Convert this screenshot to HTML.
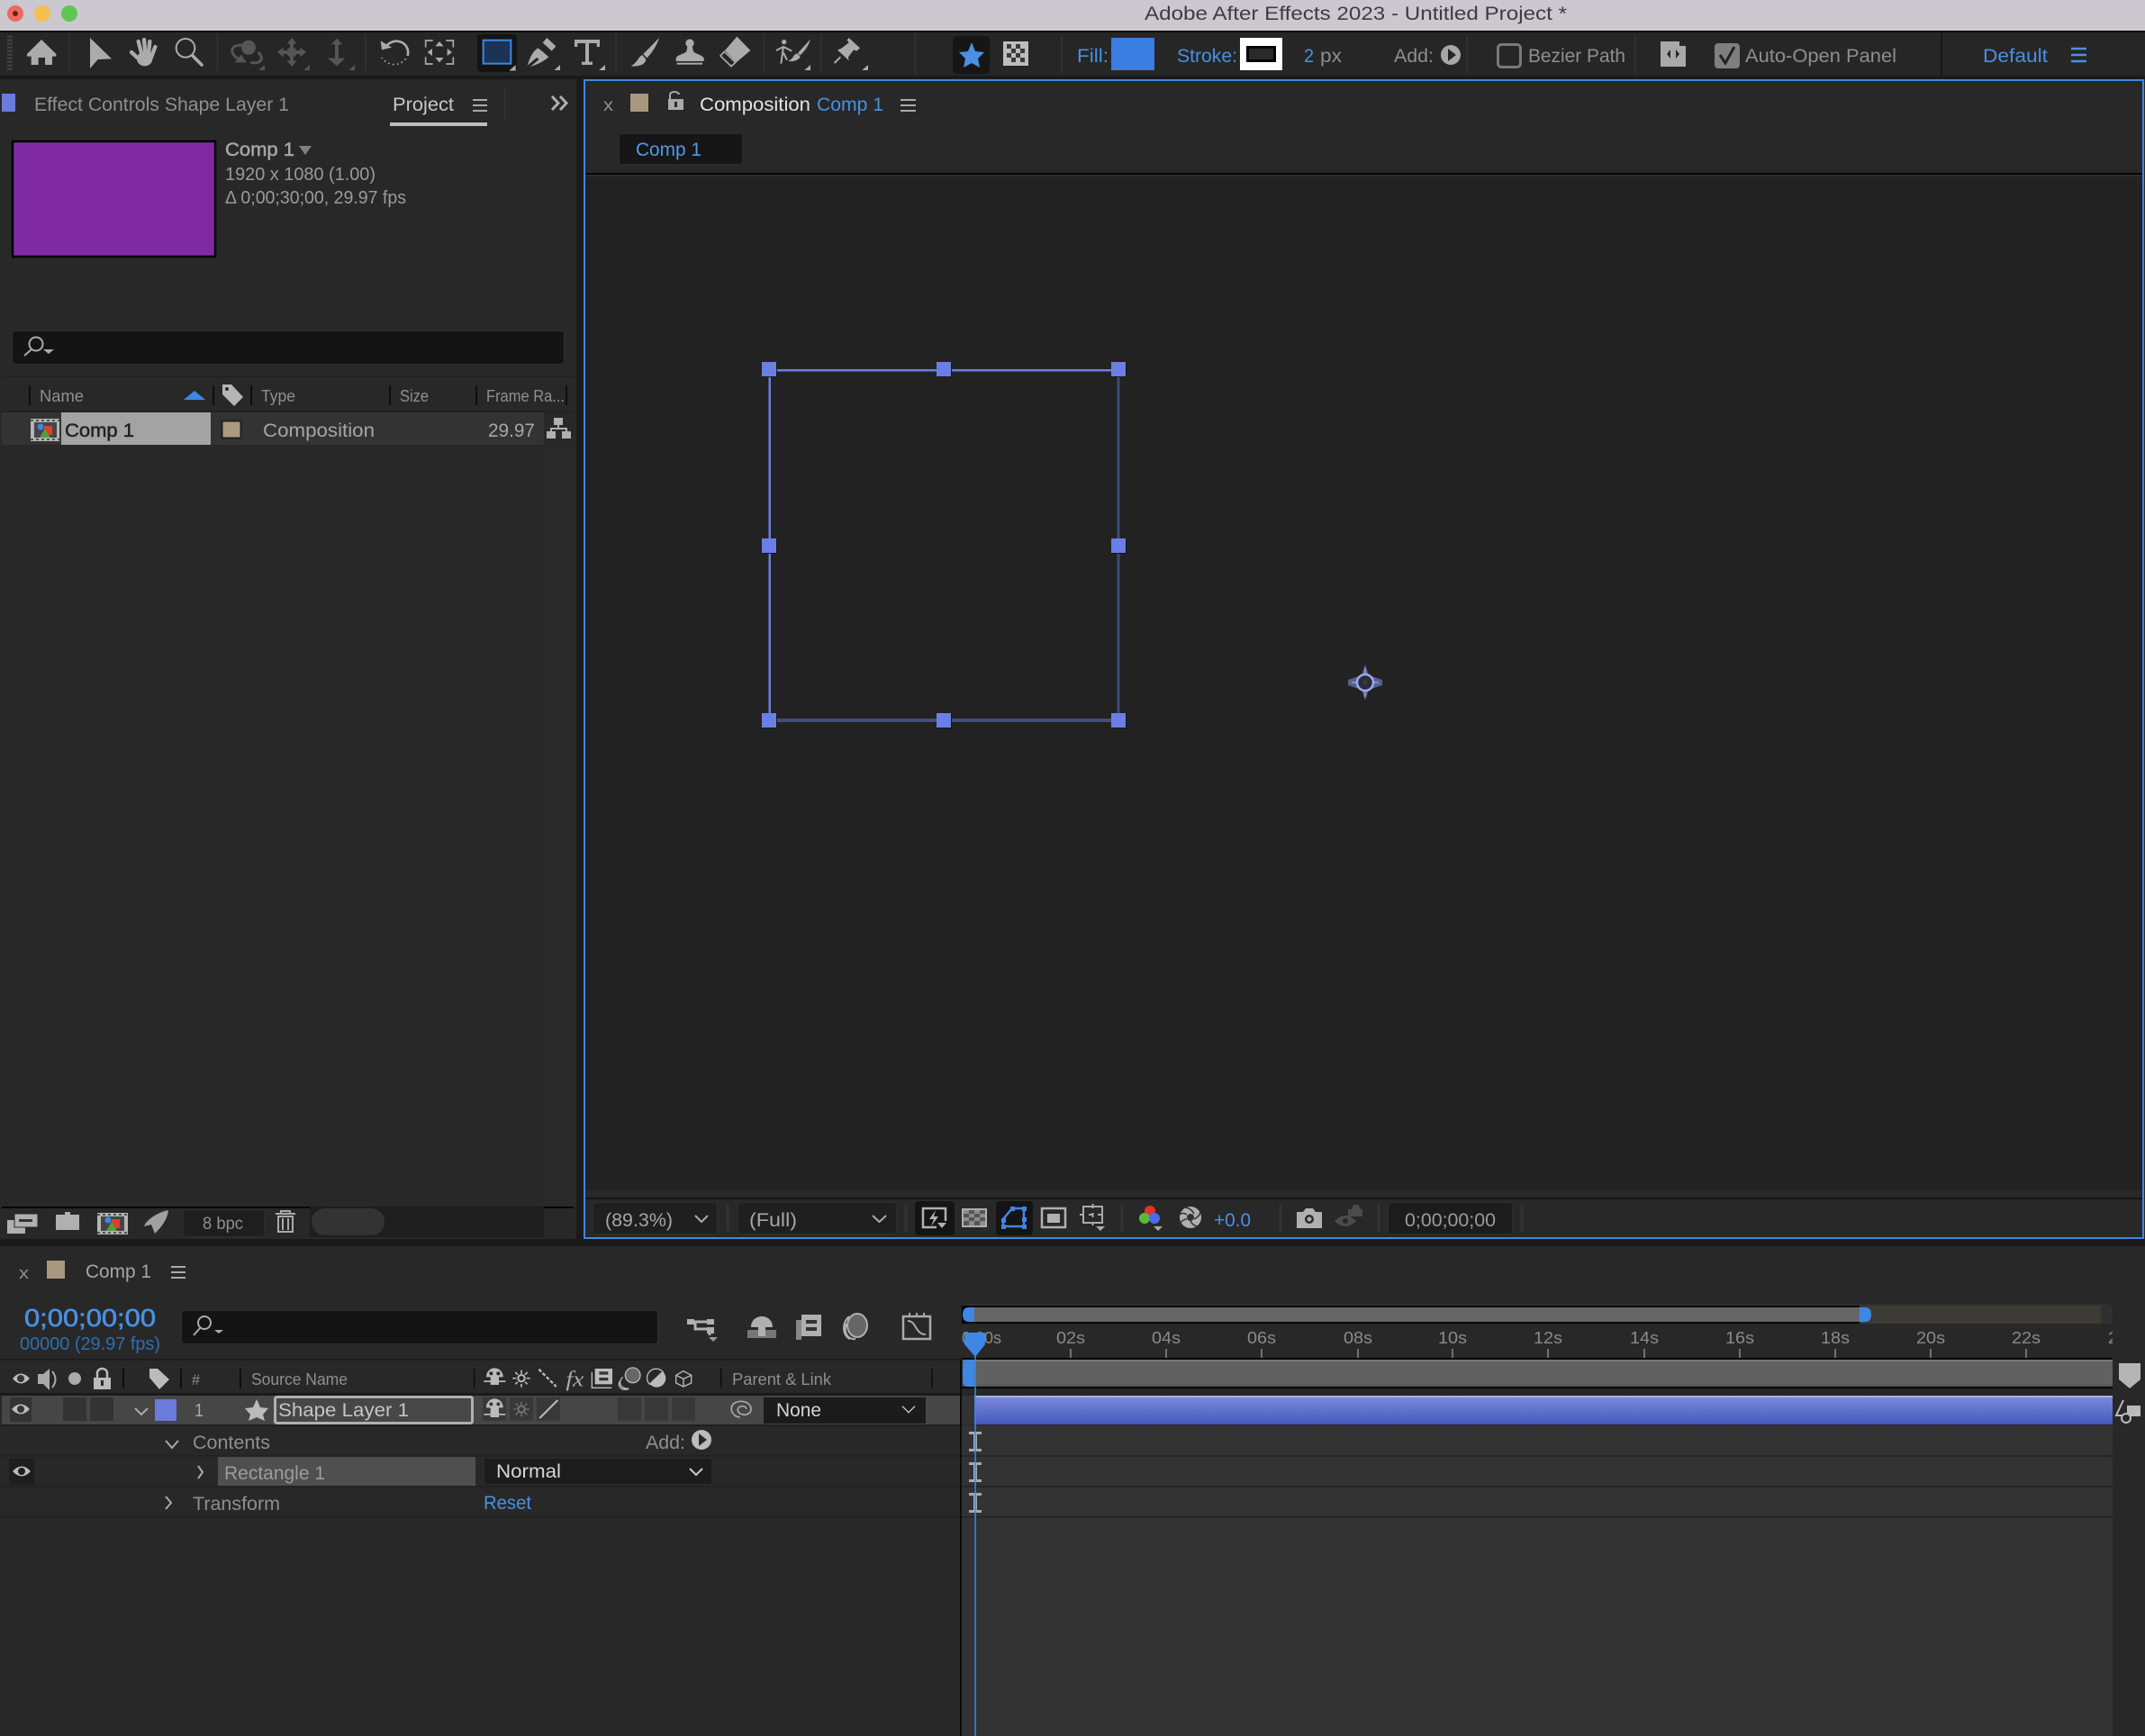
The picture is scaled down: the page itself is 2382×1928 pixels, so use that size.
<!DOCTYPE html>
<html lang="en"><head><meta charset="utf-8"><title>Adobe After Effects 2023 - Untitled Project *</title>
<style>
html,body{margin:0;padding:0;background:#282828;width:2382px;height:1928px;overflow:hidden}
svg{display:block}
text{font-family:"Liberation Sans",sans-serif;font-size:20px;fill:#8f8f8f}
.b{fill:#4a90e2}.w{fill:#d5d5d5}.l{fill:#a6a6a6}
</style></head><body>
<svg xmlns="http://www.w3.org/2000/svg" width="2382" height="1928" viewBox="0 0 2382 1928">
<defs>
<linearGradient id="lb" x1="0" y1="0" x2="0" y2="1"><stop offset="0" stop-color="#7f8dda"/><stop offset=".5" stop-color="#6273cf"/><stop offset="1" stop-color="#4257bb"/></linearGradient>
<clipPath id="rc"><rect x="1068" y="1470" width="1278" height="38"/></clipPath>
<filter id="nz" x="0" y="0" width="1" height="1"><feTurbulence type="fractalNoise" baseFrequency=".7" numOctaves="2" seed="3"/><feColorMatrix type="matrix" values="0 0 0 0 .1  0 0 0 0 .15  0 0 0 0 .5  0 0 0 1.2 -.45"/></filter>
</defs>
<!-- base -->
<rect width="2382" height="1928" fill="#282828"/>
<!-- title bar -->
<rect width="2382" height="34" fill="#cbc8cf"/>
<rect y="34" width="2382" height="2" fill="#0c0c0c"/>
<circle cx="17" cy="15" r="9" fill="#ec6a5e"/><circle cx="17" cy="15" r="3" fill="#7a1a14"/>
<circle cx="47" cy="15" r="9" fill="#f5bf4f"/><circle cx="77" cy="15" r="9" fill="#61c554"/>
<text x="1271" y="22" textLength="469" lengthAdjust="spacingAndGlyphs" style="fill:#3e3c42;font-size:21px">Adobe After Effects 2023 - Untitled Project *</text>
<!-- toolbar -->
<rect y="36" width="2382" height="48" fill="#262626"/>
<rect y="84" width="2382" height="4" fill="#1a1a1a"/>
<rect x="640" y="84" width="8" height="1300" fill="#1a1a1a"/>
<g transform="translate(0 36) scale(.33333)">
<path d="M24 14h18M24 26h18M24 38h18M24 50h18M24 62h18M24 74h18M24 86h18M24 98h18M24 110h18M24 122h18" stroke="#444" stroke-width="6"/>
<path d="M232 5V130M725 5V130M1218 5V130" stroke="#303030" stroke-width="6"/>
<path d="M138 24L187 72V80H174V108H150V84H128V108H104V80H90V72Z" fill="#ababab"/>
<path d="M300 18L372 88L326 90L300 120Z" fill="#ababab"/>
<g stroke="#ababab" stroke-width="13" stroke-linecap="round"><path d="M474 80L461 30M485 80L480 24M494 80L499 30M503 85L517 48M458 85L438 66"/></g>
<ellipse cx="482" cy="88" rx="26" ry="24" fill="#ababab"/>
<circle cx="618" cy="52" r="31" fill="none" stroke="#ababab" stroke-width="6"/>
<path d="M642 78L672 108" stroke="#ababab" stroke-width="11" stroke-linecap="round"/>
<circle cx="828" cy="50" r="24" fill="#555"/>
<path d="M795 90C760 65 770 42 805 42M835 100C870 108 882 85 860 66" fill="none" stroke="#555" stroke-width="9"/>
<path d="M782 100H822L803 74ZM882 108V126H862ZM1032 108V126H1012ZM1182 108V126H1162Z" fill="#555"/>
<path d="M972 18L988 38H978V60H1000V50L1020 66L1000 82V72H978V94H988L972 114L956 94H966V72H944V82L924 66L944 50V60H966V38H956Z" fill="#555"/>
<circle cx="972" cy="66" r="17" fill="#555"/>
<path d="M1122 20L1140 40H1128V86H1150L1122 112L1092 86H1116V40H1104Z" fill="#555"/>
<path d="M1290 42C1322 12 1368 38 1358 78" fill="none" stroke="#ababab" stroke-width="8"/>
<path d="M1268 28L1272 58L1305 50Z" fill="#ababab"/>
<path d="M1352 88C1330 115 1290 112 1272 84" fill="none" stroke="#ababab" stroke-width="5" stroke-dasharray="5 10"/>
<path d="M1418 50V27H1442M1486 27H1510V50M1510 82V105H1486M1442 105H1418V82" fill="none" stroke="#ababab" stroke-width="5"/>
<path d="M1464 30L1450 46H1478ZM1464 100L1450 84H1478ZM1424 66L1440 54V78ZM1506 66L1490 54V78Z" fill="#ababab"/>
</g>
<g transform="translate(520 36) scale(.33333)">
<rect x="30" y="6" width="132" height="126" rx="12" fill="#141414"/>
<rect x="50" y="26" width="92" height="78" fill="#1b3355" stroke="#3f87e4" stroke-width="6"/>
<path d="M158 108V128H136ZM306 108V126H286ZM456 108V126H436ZM1140 108V126H1120ZM1332 108V126H1312Z" fill="#ababab"/>
<path d="M232 52C215 62 205 85 197 110L228 84L236 90L207 114C225 108 250 98 268 82L248 64Z" fill="#ababab"/>
<path d="M262 18L292 46L278 62L248 34Z" fill="#ababab"/>
<path d="M354 24H438V48H428V36H402V98H414V108H378V98H390V36H364V48H354Z" fill="#ababab"/>
<path d="M492 5V130M985 5V130M1175 5V130M1490 0V144" stroke="#303030" stroke-width="6"/>
<path d="M636 18C625 30 595 60 583 72L595 85C610 72 630 40 636 18Z" fill="#ababab"/>
<path d="M580 75C565 82 565 100 542 112C565 115 590 108 592 90Z" fill="#ababab"/>
<circle cx="738" cy="36" r="14" fill="#ababab"/>
<path d="M730 45L728 60C725 72 700 72 692 85V96H785V85C775 72 752 72 749 60L746 45Z" fill="#ababab"/>
<rect x="695" y="101" width="85" height="6" fill="#ababab"/>
<path d="M895 14L940 60L893 100L855 60Z" fill="#ababab"/>
<path d="M853 64L890 100L876 113L840 78Z" fill="none" stroke="#ababab" stroke-width="5"/>
<circle cx="1052" cy="32" r="8" fill="#ababab"/>
<path d="M1026 60L1050 48L1078 62M1050 48L1042 104M1050 68L1062 92" fill="none" stroke="#ababab" stroke-width="6"/>
<path d="M1140 22C1125 40 1105 60 1098 70L1105 76C1120 65 1135 42 1140 22Z" fill="#ababab"/>
<path d="M1095 70C1080 75 1085 88 1065 95C1085 100 1105 90 1106 80Z" fill="#ababab"/>
<path d="M1268 18L1305 52L1294 62L1284 58L1266 82L1268 94L1230 58L1242 54L1268 34L1262 26Z" fill="#ababab"/>
<path d="M1240 82L1220 102" stroke="#ababab" stroke-width="6"/>
</g>
<rect x="1058" y="40" width="41" height="42" rx="4" fill="#161616"/>
<path d="M1079 47L1083 57L1093 58L1086 65L1088 75L1079 70L1070 75L1072 65L1065 58L1075 57Z" fill="#4a90e2"/>
<rect x="1114" y="46" width="28" height="27" fill="#bdbdbd"/>
<path d="M1118 49h5v5h-5zM1128 49h5v5h-5zM1123 54h5v5h-5zM1133 54h5v5h-5zM1118 59h5v5h-5zM1128 59h5v5h-5zM1123 64h5v5h-5zM1133 64h5v5h-5z" fill="#3a3a3a"/>
<path d="M1179 40V82M1629 40V82M1816 40V82" stroke="#303030" stroke-width="2"/>
<rect x="2155" y="36" width="2" height="48" fill="#181818"/>
<text class="b" x="1196" y="69" textLength="35" lengthAdjust="spacingAndGlyphs" style="font-size:21px">Fill:</text>
<rect x="1234" y="42" width="48" height="36" fill="#3a7de0"/><rect x="1234" y="77" width="48" height="1" fill="#777"/>
<text class="b" x="1307" y="69" textLength="67" lengthAdjust="spacingAndGlyphs" style="font-size:21px">Stroke:</text>
<rect x="1377" y="42" width="47" height="36" fill="#fff"/>
<rect x="1385.500" y="52.500" width="30" height="15" fill="#2a2a2a" stroke="#050505" stroke-width="3"/>
<text class="b" x="1448" y="69" textLength="11" lengthAdjust="spacingAndGlyphs" style="font-size:21px">2</text>
<text x="1466" y="69" textLength="24" lengthAdjust="spacingAndGlyphs" style="font-size:21px">px</text>
<text x="1548" y="69" textLength="44" lengthAdjust="spacingAndGlyphs" style="font-size:21px">Add:</text>
<circle cx="1611" cy="61" r="11" fill="#a8a8a8"/><path d="M1608 54L1617 61L1608 68Z" fill="#262626"/>
<rect x="1663.500" y="49.500" width="25" height="25" rx="4" fill="none" stroke="#7a7a7a" stroke-width="3"/>
<text x="1697" y="69" textLength="108" lengthAdjust="spacingAndGlyphs" style="font-size:21px">Bezier Path</text>
<path d="M1844 46H1865V51H1872V74H1844Z" fill="#a8a8a8"/>
<path d="M1855 55L1851 60L1855 65ZM1861 55L1865 60L1861 65Z" fill="#262626"/>
<rect x="1904" y="48" width="28" height="28" rx="4" fill="#7f7f7f"/>
<path d="M1910 61L1916 70L1926 52" fill="none" stroke="#222" stroke-width="3"/>
<text x="1938" y="69" textLength="168" lengthAdjust="spacingAndGlyphs" style="font-size:21px">Auto-Open Panel</text>
<text class="b" x="2202" y="69" textLength="72" lengthAdjust="spacingAndGlyphs" style="font-size:21px">Default</text>
<path d="M2300 54H2317M2300 61H2317M2300 68H2317" stroke="#4a90e2" stroke-width="2.500"/>

<!-- left panel -->
<rect x="2" y="104" width="15" height="20" fill="#6a7bdb"/>
<text x="38" y="123" textLength="283" lengthAdjust="spacingAndGlyphs" style="font-size:21px">Effect Controls Shape Layer 1</text>
<text x="436" y="123" textLength="68" lengthAdjust="spacingAndGlyphs" style="font-size:21px;fill:#c8c8c8">Project</text>
<rect x="433" y="136" width="108" height="4" fill="#bdbdbd"/>
<path d="M525 111H541M525 117H541M525 123H541" stroke="#aaa" stroke-width="2"/>
<rect x="560" y="97" width="1" height="38" fill="#333"/>
<path d="M613 107L620 114.500L613 122M622 107L629 114.500L622 122" fill="none" stroke="#b0b0b0" stroke-width="3"/>
<rect x="14" y="157" width="225" height="128" fill="#7f2aa3" stroke="#000" stroke-width="2.500"/>
<text class="l" x="250" y="173" textLength="77" lengthAdjust="spacingAndGlyphs" style="font-size:21px;stroke:#a6a6a6;stroke-width:.5">Comp 1</text>
<path d="M332 162H346L339 172Z" fill="#7f7f7f"/>
<text x="250" y="200" textLength="167" lengthAdjust="spacingAndGlyphs" style="font-size:20px;fill:#9a9a9a">1920 x 1080 (1.00)</text>
<text x="250" y="226" textLength="201" lengthAdjust="spacingAndGlyphs" style="font-size:20px;fill:#9a9a9a">Δ 0;00;30;00, 29.97 fps</text>
<rect x="13.500" y="367.500" width="613" height="37" rx="4" fill="#141414" stroke="#2f2f2f"/>
<circle cx="40" cy="382" r="7.500" fill="none" stroke="#aaa" stroke-width="2"/><path d="M35 388L27 395" stroke="#aaa" stroke-width="2"/><path d="M48 388H60L54 393Z" fill="#aaa"/>
<rect x="2" y="417" width="636" height="2" fill="#222"/>
<path d="M33 428V450M237 428V450M279 428V450M433 428V450M529 428V450M629 428V450" stroke="#0e0e0e" stroke-width="2"/>
<text x="44" y="446" textLength="49" lengthAdjust="spacingAndGlyphs" style="font-size:18px">Name</text>
<path d="M204 444L216 434L228 444Z" fill="#3f87e4"/>
<path d="M247 427H257L270 441L260 451L247 438Z" fill="#b5b5b5"/><circle cx="252" cy="432" r="2" fill="#282828"/>
<text x="290" y="446" textLength="38" lengthAdjust="spacingAndGlyphs" style="font-size:18px">Type</text>
<text x="444" y="446" textLength="32" lengthAdjust="spacingAndGlyphs" style="font-size:18px">Size</text>
<text x="540" y="446" textLength="87" lengthAdjust="spacingAndGlyphs" style="font-size:18px">Frame Ra...</text>
<rect x="2" y="456" width="636" height="2" fill="#222"/>
<rect x="2" y="458" width="602" height="36" fill="#333"/>
<rect x="68" y="458" width="166" height="36" fill="#a3a3a3"/>
<rect x="34" y="465" width="32" height="25" fill="#b5b5b5"/><rect x="38" y="469" width="25" height="17" fill="#454545"/>
<path d="M36 465V490M40 465V490" stroke="#333" stroke-width="0"/>
<path d="M34 467h32M34 488h32" stroke="#333" stroke-width="1.500" stroke-dasharray="3 3"/>
<circle cx="45" cy="474" r="3.500" fill="#3d86e5"/><rect x="49" y="473" width="9" height="10" fill="#e33b2e"/><path d="M50 476L56 486H44Z" fill="#4ea23e"/>
<text x="72" y="485" textLength="77" lengthAdjust="spacingAndGlyphs" style="font-size:21px;fill:#222;stroke:#222;stroke-width:.5">Comp 1</text>
<rect x="246.500" y="467.500" width="21" height="19" fill="#ab9a7d" stroke="#1f1f1f" stroke-width="2"/>
<text class="l" x="292" y="485" textLength="124" lengthAdjust="spacingAndGlyphs" style="font-size:21px">Composition</text>
<text class="l" x="542" y="485" textLength="52" lengthAdjust="spacingAndGlyphs" style="font-size:21px">29.97</text>
<path d="M615 464h10v8h-10zM607 479h10v8h-10zM624 479h10v8h-10z" fill="#b0b0b0"/><path d="M620 472V476M612 479V476H629V479" fill="none" stroke="#b0b0b0" stroke-width="2"/>
<rect x="604" y="496" width="36" height="844" fill="#2a2a2a"/>
<!-- project bottom bar -->
<rect x="2" y="1340" width="635" height="2" fill="#060606"/>
<rect x="344" y="1340" width="260" height="34" fill="#1e1e1e"/>
<rect x="346" y="1342" width="81" height="30" rx="15" fill="#333"/>
<rect x="8" y="1355" width="20" height="15" fill="#b0b0b0"/><rect x="16" y="1348" width="26" height="15" fill="#b0b0b0" stroke="#282828"/><rect x="21" y="1354" width="15" height="3" fill="#333"/>
<path d="M62 1349H72V1346H78V1349H88V1366H62Z" fill="#b0b0b0"/>
<rect x="108" y="1347" width="34" height="24" fill="#b5b5b5"/><rect x="112" y="1351" width="26" height="16" fill="#454545"/>
<path d="M108 1349h34M108 1369h34" stroke="#333" stroke-width="1.500" stroke-dasharray="3 3"/>
<circle cx="120" cy="1355" r="3.500" fill="#3d86e5"/><rect x="124" y="1354" width="9" height="10" fill="#e33b2e"/><path d="M124 1357L130 1367H118Z" fill="#4ea23e"/>
<path d="M187 1344C176 1346 163 1354 160 1362L168 1360L172 1370C180 1362 186 1354 187 1344Z" fill="#a0a0a0"/>
<rect x="203.500" y="1343.500" width="90" height="30" rx="3" fill="#1e1e1e" stroke="#2e2e2e"/>
<text x="225" y="1365" textLength="45" lengthAdjust="spacingAndGlyphs" style="font-size:19px">8 bpc</text>
<path d="M306 1348H328M312 1348V1345H322V1348M309 1351H325V1368H309ZM314 1353V1366M320 1353V1366" fill="none" stroke="#aaa" stroke-width="2"/>

<!-- composition panel -->
<rect x="648" y="88" width="1734" height="1288" fill="#282828"/>
<rect x="650" y="196" width="1730" height="1126" fill="#222"/>
<rect x="650" y="192" width="1730" height="2" fill="#050505"/>
<rect x="650" y="194" width="1730" height="2" fill="#2e2e2e"/>
<text x="670" y="123" textLength="11" lengthAdjust="spacingAndGlyphs" style="font-size:19px">x</text>
<rect x="700" y="104" width="20" height="20" fill="#a8987d"/>
<path d="M744 110V105A5 3 0 0 1 754 105" fill="none" stroke="#aaa" stroke-width="2"/><rect x="742" y="110" width="17" height="12" fill="#aaa"/><rect x="749" y="113" width="3" height="6" fill="#282828"/>
<text x="777" y="123" textLength="123" lengthAdjust="spacingAndGlyphs" style="font-size:21px;fill:#e4e4e4">Composition</text>
<text class="b" x="907" y="123" textLength="74" lengthAdjust="spacingAndGlyphs" style="font-size:21px">Comp 1</text>
<path d="M1000 111H1017M1000 117H1017M1000 123H1017" stroke="#aaa" stroke-width="2"/>
<rect x="687.500" y="148.500" width="137" height="34" rx="3" fill="#161616" stroke="#2c2c2c"/>
<text x="706" y="173" textLength="73" lengthAdjust="spacingAndGlyphs" style="font-size:21px;fill:#4f9ae8">Comp 1</text>
<!-- shape -->
<rect x="854" y="410" width="390" height="2.500" fill="#6a7fe0"/>
<rect x="853.500" y="410" width="2.500" height="390" fill="#6a7fe0"/>
<rect x="1240.500" y="410" width="3" height="390" fill="#3f4a78"/>
<rect x="854" y="798" width="390" height="4" fill="#444c78"/>
<g fill="#141414" opacity=".9"><rect x="847" y="403" width="16" height="16"/><rect x="1041" y="403" width="16" height="16"/><rect x="1235" y="403" width="16" height="16"/><rect x="847" y="599" width="16" height="16"/><rect x="1235" y="599" width="16" height="16"/><rect x="847" y="793" width="16" height="16"/><rect x="1041" y="793" width="16" height="16"/><rect x="1235" y="793" width="16" height="16"/></g>
<g fill="#6a7fe6"><rect x="846" y="402" width="16" height="16"/><rect x="1040" y="402" width="16" height="16"/><rect x="1234" y="402" width="16" height="16"/><rect x="846" y="598" width="16" height="16"/><rect x="1234" y="598" width="16" height="16"/><rect x="846" y="792" width="16" height="16"/><rect x="1040" y="792" width="16" height="16"/><rect x="1234" y="792" width="16" height="16"/></g>
<path d="M1516 738L1520 750L1535 755V761L1520 766L1516 778L1512 766L1497 761V755L1512 750Z" fill="#59618c"/>
<path d="M1516 742V774M1501 758H1531" stroke="#7d8cd6" stroke-width="2"/>
<circle cx="1516" cy="758" r="9" fill="#2a2c3a" stroke="#9aaaf0" stroke-width="2.500"/><circle cx="1516" cy="758" r="3" fill="#3a3a3a"/>
<!-- comp bottom bar -->
<rect x="650" y="1330" width="1730" height="2" fill="#151515"/>
<rect x="658.500" y="1335.500" width="138" height="35" rx="3" fill="#1f1f1f" stroke="#2e2e2e"/>
<rect x="819.500" y="1335.500" width="176" height="35" rx="3" fill="#1f1f1f" stroke="#2e2e2e"/>
<text class="l" x="672" y="1362" textLength="75" lengthAdjust="spacingAndGlyphs" style="font-size:21px">(89.3%)</text>
<text class="l" x="832" y="1362" textLength="53" lengthAdjust="spacingAndGlyphs" style="font-size:21px">(Full)</text>
<path d="M772 1350L779 1357L786 1350M969 1350L976.500 1357L984 1350" fill="none" stroke="#aaa" stroke-width="2"/>
<path d="M808 1338V1368M1006 1338V1368M1246 1338V1368M1422 1338V1368M1531 1338V1368M1690 1338V1368" stroke="#333" stroke-width="3"/>
<rect x="1016" y="1334" width="44" height="38" rx="4" fill="#141414"/>
<path d="M1050 1356V1342H1025V1363H1040" fill="none" stroke="#b0b0b0" stroke-width="2.500"/>
<path d="M1039 1344L1032 1354H1037L1034 1362L1042 1351H1037Z" fill="#b0b0b0"/><path d="M1041 1358H1051L1046 1364Z" fill="#b0b0b0"/>
<rect x="1068" y="1342" width="28" height="21" fill="#b0b0b0"/><rect x="1070" y="1344" width="24" height="17" fill="#555"/><path d="M1070 1344h6v4h-6zM1082 1344h6v4h-6zM1076 1348h6v4h-6zM1088 1348h6v4h-6zM1070 1352h6v4h-6zM1082 1352h6v4h-6zM1076 1356h6v5h-6zM1088 1356h6v5h-6z" fill="#8c8c8c"/>
<rect x="1106" y="1334" width="41" height="38" rx="4" fill="#141414"/>
<path d="M1124 1342H1137V1362H1114V1354Z" fill="none" stroke="#3f87e4" stroke-width="2.500"/>
<g fill="#3f87e4"><rect x="1122" y="1340" width="5" height="5"/><rect x="1135" y="1340" width="5" height="5"/><rect x="1112" y="1353" width="5" height="5"/><rect x="1135" y="1352" width="5" height="5"/><rect x="1112" y="1360" width="5" height="5"/><rect x="1135" y="1360" width="5" height="5"/></g>
<rect x="1157" y="1342" width="26" height="21" fill="none" stroke="#b0b0b0" stroke-width="2.500"/><rect x="1163" y="1348" width="14" height="10" fill="#b0b0b0"/>
<rect x="1203" y="1340" width="21" height="18" fill="none" stroke="#aaa" stroke-width="2"/>
<path d="M1199 1349H1228M1213.500 1337V1361" stroke="#aaa" stroke-width="2" stroke-dasharray="5 5"/><path d="M1217 1362H1227L1222 1367Z" fill="#aaa"/>
<ellipse cx="1277" cy="1345" rx="6" ry="6" fill="#e0342a"/><ellipse cx="1271" cy="1353" rx="6" ry="6" fill="#5cb83c"/><ellipse cx="1282" cy="1353" rx="6" ry="6" fill="#4a6ae8"/>
<path d="M1281 1362H1291L1286 1367Z" fill="#aaa"/>
<circle cx="1322" cy="1352" r="12" fill="#b0b0b0"/><circle cx="1322" cy="1352" r="4" fill="#333"/>
<path d="M1326 1348C1324 1344 1320 1341 1315 1341M1326 1354C1330 1352 1333 1349 1333 1345M1322 1356C1324 1360 1327 1362 1331 1362M1318 1354C1314 1354 1311 1357 1310 1361M1318 1349C1315 1347 1312 1347 1310 1349" fill="none" stroke="#333" stroke-width="1.500"/>
<text class="b" x="1348" y="1362" textLength="41" lengthAdjust="spacingAndGlyphs" style="font-size:21px">+0.0</text>
<path d="M1440 1346H1447L1450 1342H1458L1461 1346H1468V1364H1440Z" fill="#b0b0b0"/><circle cx="1454" cy="1354" r="5" fill="#2a2a2a"/><circle cx="1454" cy="1354" r="2.500" fill="#b0b0b0"/>
<path d="M1482 1356Q1494 1344 1506 1356Q1494 1368 1482 1356Z" fill="#4b4b4b"/><circle cx="1494" cy="1356" r="3" fill="#282828"/>
<path d="M1497 1343H1501L1503 1338H1509L1511 1343H1513V1351H1497Z" fill="#4b4b4b"/>
<rect x="1541.500" y="1335.500" width="138" height="35" rx="3" fill="#1c1c1c" stroke="#2e2e2e"/>
<text x="1560" y="1362" textLength="101" lengthAdjust="spacingAndGlyphs" style="font-size:21px;fill:#9a9a9a">0;00;00;00</text>
<!-- blue focus border -->
<rect x="649" y="89" width="1731" height="1286" fill="none" stroke="#3f87e4" stroke-width="2"/>
<rect x="0" y="1376" width="2382" height="8" fill="#1a1a1a"/>

<!-- timeline -->
<rect x="0" y="1384" width="2382" height="544" fill="#282828"/>
<text x="21" y="1420" textLength="11" lengthAdjust="spacingAndGlyphs" style="font-size:18px">x</text>
<rect x="52" y="1400" width="20" height="20" fill="#a8987d"/>
<text class="l" x="95" y="1419" textLength="73" lengthAdjust="spacingAndGlyphs" style="font-size:21px">Comp 1</text>
<path d="M190 1407H206M190 1413H206M190 1419H206" stroke="#aaa" stroke-width="2"/>
<text x="27" y="1473" textLength="146" lengthAdjust="spacingAndGlyphs" style="font-size:28px;fill:#4a90e2;stroke:#4a90e2;stroke-width:.6">0;00;00;00</text>
<text x="22" y="1499" textLength="156" lengthAdjust="spacingAndGlyphs" style="font-size:20px;fill:#2f6db5">00000 (29.97 fps)</text>
<rect x="201.500" y="1455.500" width="529" height="37" rx="3" fill="#141414" stroke="#2e2e2e"/>
<circle cx="227" cy="1469" r="7" fill="none" stroke="#aaa" stroke-width="2"/><path d="M222 1475L215 1483" stroke="#aaa" stroke-width="2"/><path d="M238 1477H248L243 1481Z" fill="#aaa"/>
<path d="M766 1468H790M772 1468V1476H788V1483" fill="none" stroke="#b0b0b0" stroke-width="3"/><path d="M763 1465h8v6h-8zM785 1465h8v6h-8zM785 1474h8v7h-8z" fill="#b0b0b0"/><path d="M787 1485H797L792 1490Z" fill="#999"/>
<path d="M834 1474C834 1466 840 1462 846 1462C852 1462 858 1466 858 1474H850V1482H842V1474Z" fill="#b0b0b0"/><rect x="830" y="1477" width="32" height="9" fill="#777"/><rect x="842" y="1472" width="8" height="12" fill="#b0b0b0"/>
<rect x="890" y="1460" width="22" height="24" fill="#b0b0b0"/><rect x="884" y="1466" width="6" height="22" fill="#888"/><rect x="895" y="1466" width="12" height="4" fill="#333"/><rect x="895" y="1474" width="12" height="4" fill="#333"/>
<ellipse cx="952" cy="1472" rx="11" ry="13" fill="#666" stroke="#b0b0b0" stroke-width="2"/><path d="M940 1470C936 1480 942 1488 950 1487M943 1462C934 1470 936 1484 944 1487" fill="none" stroke="#b0b0b0" stroke-width="2"/>
<rect x="1003" y="1462" width="30" height="25" fill="none" stroke="#aaa" stroke-width="2.500"/><path d="M1008 1467C1018 1467 1016 1482 1028 1482" fill="none" stroke="#aaa" stroke-width="2"/><path d="M1010 1462V1458M1018 1462V1458M1026 1462V1458" stroke="#aaa" stroke-width="2"/>
<!-- header row -->
<rect x="0" y="1509" width="1067" height="2" fill="#1c1c1c"/>
<rect x="0" y="1547" width="1067" height="3" fill="#1a1a1a"/>
<path d="M14 1531Q23 1520 33 1531Q23 1542 14 1531Z" fill="#bbb"/><circle cx="23" cy="1531" r="4" fill="#333"/>
<path d="M42 1526H48L55 1520V1544L48 1537H42Z" fill="#aaa"/><path d="M58 1523Q65 1532 58 1541" fill="none" stroke="#aaa" stroke-width="2"/>
<circle cx="83" cy="1531" r="7" fill="#aaa"/>
<path d="M108 1530V1525A5.500 5 0 0 1 119 1525V1530" fill="none" stroke="#bbb" stroke-width="2.500"/><rect x="104" y="1530" width="19" height="13" fill="#bbb"/><rect x="112" y="1533" width="3" height="6" fill="#282828"/>
<path d="M137 1520V1542M201 1520V1542M267 1520V1542" stroke="#0e0e0e" stroke-width="2"/>
<path d="M166 1520H175L188 1532L177 1543L166 1530Z" fill="#bbb"/>
<text x="213" y="1538" textLength="9" lengthAdjust="spacingAndGlyphs" style="font-size:17px">#</text>
<text x="279" y="1538" textLength="107" lengthAdjust="spacingAndGlyphs" style="font-size:18px">Source Name</text>
<!-- layer row -->
<rect x="2" y="1550" width="1065" height="32" fill="#464646"/>
<rect x="11" y="1552" width="24" height="27" fill="#333"/>
<path d="M13 1565Q23 1554 33 1565Q23 1576 13 1565Z" fill="#bbb"/><circle cx="23" cy="1565" r="4" fill="#333"/>
<rect x="70" y="1552" width="26" height="26" fill="#333"/><rect x="100" y="1552" width="26" height="26" fill="#333"/>
<path d="M150 1564L157 1571L164 1564" fill="none" stroke="#aaa" stroke-width="2"/>
<rect x="172" y="1554" width="24" height="24" fill="#6a7bdb"/>
<text x="216" y="1573" textLength="10" lengthAdjust="spacingAndGlyphs" style="font-size:20px;fill:#aaa">1</text>
<path d="M285 1554L289 1563L298 1564L292 1571L294 1578L285 1574L276 1578L278 1571L272 1564L281 1563Z" fill="#bbb"/>
<rect x="305.500" y="1551.500" width="219" height="29" rx="2" fill="#474747" stroke="#b0b0b0" stroke-width="3"/>
<text x="309" y="1573" textLength="145" lengthAdjust="spacingAndGlyphs" style="font-size:21px;fill:#c5c5c5">Shape Layer 1</text>
<rect x="848" y="1552" width="180" height="29" fill="#1b1b1b"/>
<text x="862" y="1573" textLength="50" lengthAdjust="spacingAndGlyphs" style="font-size:21px;fill:#d5d5d5">None</text>
<g transform="translate(520 1510) scale(.33333)">
<path d="M20 30V95M842 30V95M1545 30V95" stroke="#0e0e0e" stroke-width="5"/>
<path d="M60 58C60 38 75 28 88 28C101 28 116 38 116 58H102V84H74V58Z" fill="#bbb"/><rect x="52" y="70" width="72" height="5" fill="#bbb"/><circle cx="76" cy="46" r="6" fill="#282828"/><circle cx="100" cy="46" r="6" fill="#282828"/>
<circle cx="177" cy="62" r="11" fill="none" stroke="#bbb" stroke-width="6"/><path d="M177 35V92M148 62H206M157 42L197 82M197 42L157 82" stroke="#bbb" stroke-width="5" stroke-dasharray="12 34 12"/>
<path d="M235 32L293 90" stroke="#bbb" stroke-width="7" stroke-dasharray="12 6"/>
<text x="325" y="88" style="font-family:'Liberation Serif',serif;font-style:italic;font-size:72px;fill:#aaa" textLength="60" lengthAdjust="spacingAndGlyphs">fx</text>
<path d="M412 42V94H478" fill="none" stroke="#bbb" stroke-width="4"/><rect x="422" y="30" width="58" height="52" fill="#bbb"/><rect x="436" y="40" width="30" height="10" fill="#333"/><rect x="436" y="60" width="30" height="10" fill="#333"/>
<circle cx="548" cy="52" r="25" fill="#666" stroke="#bbb" stroke-width="4"/><path d="M515 58C495 75 510 100 535 96M505 72C495 92 515 105 535 97" fill="none" stroke="#bbb" stroke-width="4"/>
<circle cx="628" cy="62" r="30" fill="#bbb"/><path d="M604 82A30 30 0 0 1 648 40Z" fill="#282828" stroke="#bbb" stroke-width="4"/>
<path d="M717 38L743 52V78L717 90L692 78V52ZM692 52L717 64L743 52M717 64V90" fill="none" stroke="#bbb" stroke-width="4"/>
<g fill="#383838"><rect x="48" y="125" width="78" height="78"/><rect x="138" y="125" width="78" height="78"/><rect x="228" y="125" width="78" height="78"/><rect x="498" y="125" width="78" height="78"/><rect x="588" y="125" width="78" height="78"/><rect x="678" y="125" width="78" height="78"/></g>
<path d="M60 160C60 140 75 130 88 130C101 130 116 140 116 160H102V192H74V160Z" fill="#bbb"/><rect x="52" y="180" width="72" height="5" fill="#bbb"/><circle cx="76" cy="148" r="6" fill="#383838"/><circle cx="100" cy="148" r="6" fill="#383838"/>
<circle cx="177" cy="165" r="11" fill="none" stroke="#777" stroke-width="6"/><path d="M177 140V190M150 165H204M158 146L196 184M196 146L158 184" stroke="#777" stroke-width="4" stroke-dasharray="10 30 14"/>
<path d="M238 195L298 135" stroke="#bbb" stroke-width="6"/>
<path d="M905 192C878 190 868 160 885 146C905 132 942 140 942 165C942 188 905 190 898 170C895 155 920 148 927 164" fill="none" stroke="#aaa" stroke-width="5"/>
<path d="M1446 155L1467 176L1488 155" fill="none" stroke="#ccc" stroke-width="4"/>
</g>
<text x="813" y="1538" textLength="110" lengthAdjust="spacingAndGlyphs" style="font-size:18px">Parent &amp; Link</text>
<!-- sub rows -->
<rect x="0" y="1582" width="1067" height="2" fill="#1f1f1f"/>
<path d="M184 1600L191 1608L198 1600" fill="none" stroke="#aaa" stroke-width="2"/>
<text x="214" y="1609" textLength="86" lengthAdjust="spacingAndGlyphs" style="font-size:21px">Contents</text>
<text x="717" y="1609" textLength="44" lengthAdjust="spacingAndGlyphs" style="font-size:21px">Add:</text>
<circle cx="779" cy="1599" r="11" fill="#bbb"/><path d="M776 1592L785 1599L776 1606Z" fill="#282828"/>
<rect x="0" y="1616" width="1067" height="2" fill="#222"/>
<rect x="10" y="1620" width="28" height="29" fill="#1e1e1e"/>
<path d="M14 1634Q24 1623 34 1634Q24 1645 14 1634Z" fill="#bbb"/><circle cx="24" cy="1634" r="4" fill="#1e1e1e"/>
<path d="M220 1628L225 1635L220 1642" fill="none" stroke="#aaa" stroke-width="2"/>
<rect x="242" y="1618" width="286" height="32" fill="#4f4f4f"/>
<text x="249" y="1643" textLength="112" lengthAdjust="spacingAndGlyphs" style="font-size:21px;fill:#9c9c9c">Rectangle 1</text>
<rect x="537.500" y="1619.500" width="253" height="29" fill="#1c1c1c" stroke="#2a2a2a"/>
<text x="551" y="1641" textLength="72" lengthAdjust="spacingAndGlyphs" style="font-size:21px;fill:#d5d5d5">Normal</text>
<path d="M766 1631L773 1638L780 1631" fill="none" stroke="#ccc" stroke-width="2"/>
<rect x="0" y="1650" width="1067" height="2" fill="#222"/>
<path d="M184 1662L190 1669L184 1676" fill="none" stroke="#aaa" stroke-width="2"/>
<text x="214" y="1677" textLength="97" lengthAdjust="spacingAndGlyphs" style="font-size:21px">Transform</text>
<text class="b" x="537" y="1676" textLength="53" lengthAdjust="spacingAndGlyphs" style="font-size:21px">Reset</text>
<rect x="0" y="1684" width="1067" height="2" fill="#222"/>
<!-- timeline right -->
<rect x="1068" y="1686" width="1278" height="242" fill="#333"/>
<rect x="1068" y="1583" width="1278" height="33" fill="#333"/><rect x="1068" y="1618" width="1278" height="32" fill="#333"/><rect x="1068" y="1652" width="1278" height="32" fill="#333"/>
<rect x="1068" y="1616" width="1278" height="2" fill="#262626"/><rect x="1068" y="1650" width="1278" height="2" fill="#262626"/><rect x="1068" y="1684" width="1278" height="2" fill="#262626"/>
<path d="M1068 1470V1456Q1068 1448 1076 1448H2338Q2346 1448 2346 1456V1470Z" fill="#303030"/>
<rect x="1068" y="1450" width="997" height="20" fill="#050505"/>
<rect x="1082" y="1452" width="983" height="16" fill="#666"/>
<rect x="2065" y="1450" width="268" height="20" fill="#3e3a35"/>
<path d="M1082 1452H1076Q1069 1452 1069 1460Q1069 1468 1076 1468H1082Z" fill="#3f87e4"/>
<path d="M2065 1452H2071Q2078 1452 2078 1460Q2078 1468 2071 1468H2065Z" fill="#3f87e4"/>
<rect x="1068" y="1470" width="1278" height="38" fill="#282828"/>
<g clip-path="url(#rc)">
<text x="1068" y="1492" textLength="44" lengthAdjust="spacingAndGlyphs" style="font-size:18px;fill:#8a8a8a">0:00s</text>
<text x="1173" y="1492" textLength="32" lengthAdjust="spacingAndGlyphs" style="font-size:18px;fill:#8a8a8a">02s</text>
<text x="1279" y="1492" textLength="32" lengthAdjust="spacingAndGlyphs" style="font-size:18px;fill:#8a8a8a">04s</text>
<text x="1385" y="1492" textLength="32" lengthAdjust="spacingAndGlyphs" style="font-size:18px;fill:#8a8a8a">06s</text>
<text x="1492" y="1492" textLength="32" lengthAdjust="spacingAndGlyphs" style="font-size:18px;fill:#8a8a8a">08s</text>
<text x="1597" y="1492" textLength="32" lengthAdjust="spacingAndGlyphs" style="font-size:18px;fill:#8a8a8a">10s</text>
<text x="1703" y="1492" textLength="32" lengthAdjust="spacingAndGlyphs" style="font-size:18px;fill:#8a8a8a">12s</text>
<text x="1810" y="1492" textLength="32" lengthAdjust="spacingAndGlyphs" style="font-size:18px;fill:#8a8a8a">14s</text>
<text x="1916" y="1492" textLength="32" lengthAdjust="spacingAndGlyphs" style="font-size:18px;fill:#8a8a8a">16s</text>
<text x="2022" y="1492" textLength="32" lengthAdjust="spacingAndGlyphs" style="font-size:18px;fill:#8a8a8a">18s</text>
<text x="2128" y="1492" textLength="32" lengthAdjust="spacingAndGlyphs" style="font-size:18px;fill:#8a8a8a">20s</text>
<text x="2234" y="1492" textLength="32" lengthAdjust="spacingAndGlyphs" style="font-size:18px;fill:#8a8a8a">22s</text>
<text x="2341" y="1492" textLength="32" lengthAdjust="spacingAndGlyphs" style="font-size:18px;fill:#8a8a8a">24s</text>
</g>
<path d="M1189 1498V1508M1295 1498V1508M1401 1498V1508M1508 1498V1508M1613 1498V1508M1719 1498V1508M1826 1498V1508M1932 1498V1508M2038 1498V1508M2144 1498V1508M2250 1498V1508" stroke="#8a8a8a" stroke-width="1.500"/>
<rect x="1068" y="1508" width="1278" height="2" fill="#050505"/>
<rect x="1069" y="1510" width="1277" height="30" fill="#616161"/><rect x="1069" y="1510" width="1277" height="2" fill="#777"/><rect x="1069" y="1538" width="1277" height="2" fill="#555"/>
<path d="M1082 1510H1076Q1069 1510 1069 1518V1532Q1069 1540 1076 1540H1082Z" fill="#3f87e4"/>
<rect x="1068" y="1540" width="1278" height="2" fill="#050505"/>
<rect x="1067" y="1542" width="1279" height="8" fill="#262626"/>
<rect x="1067" y="1550" width="15" height="32" fill="#333"/>
<rect x="1082" y="1550" width="1264" height="32" fill="url(#lb)"/>
<rect x="1082" y="1552" width="1264" height="30" filter="url(#nz)" opacity=".35"/>
<rect x="1082" y="1550" width="1264" height="2" fill="#a6b0e6"/>
<rect x="1066" y="1510" width="2" height="418" fill="#0c0c0c"/>
<g fill="#aaa"><path d="M1076 1590H1090V1593H1085V1609H1090V1612H1076V1609H1081V1593H1076Z"/><path d="M1076 1624H1090V1627H1085V1643H1090V1646H1076V1643H1081V1627H1076Z"/><path d="M1076 1658H1090V1661H1085V1677H1090V1680H1076V1677H1081V1661H1076Z"/></g>
<rect x="1082.300" y="1490" width="1.500" height="438" fill="#3f87e4"/>
<path d="M1071 1480H1094V1493L1083 1507L1071 1493Z" fill="#3f87e4"/>
<path d="M2353 1514H2377V1532L2365 1542L2353 1532Z" fill="#b5b5b5"/>
<path d="M2358 1555L2350 1572H2360" fill="none" stroke="#bbb" stroke-width="2"/><rect x="2362" y="1561" width="15" height="12" fill="#bbb"/><circle cx="2361" cy="1575" r="5" fill="#282828" stroke="#bbb" stroke-width="2"/>
</svg>
</body></html>
